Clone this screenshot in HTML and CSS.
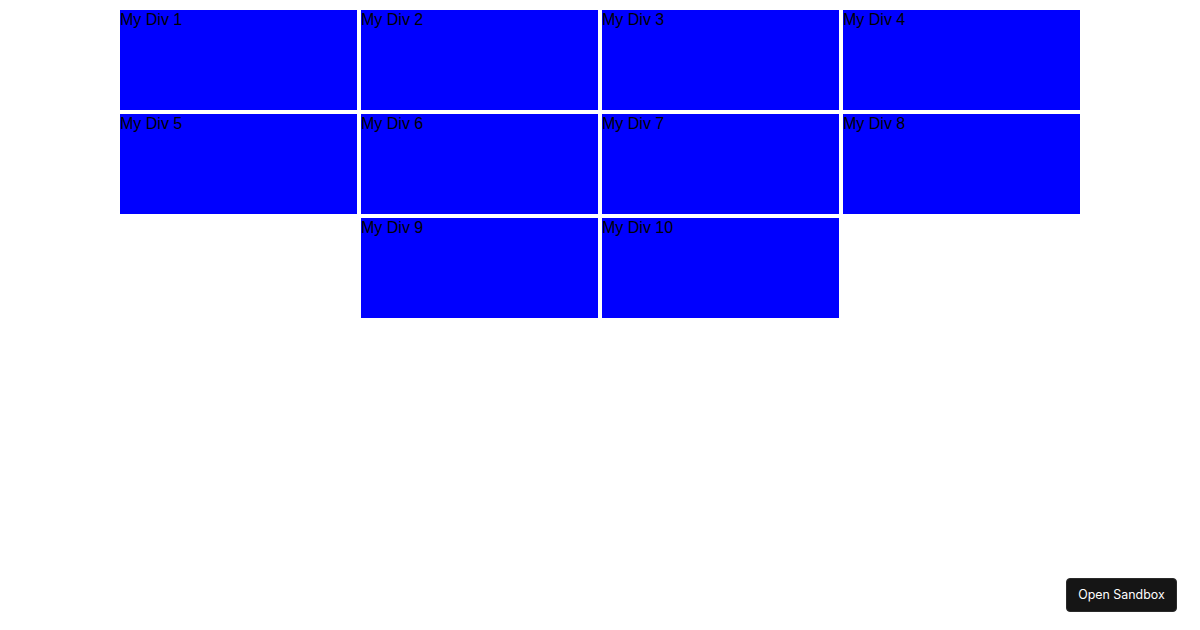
FILE: index.html
```html
<!DOCTYPE html>
<html>
<head>
<meta charset="utf-8">
<link rel="stylesheet" href="styles.css">
</head>
<body>
<div class="grid">
  <div class="box">My Div 1</div>
  <div class="box">My Div 2</div>
  <div class="box">My Div 3</div>
  <div class="box">My Div 4</div>
  <div class="box">My Div 5</div>
  <div class="box">My Div 6</div>
  <div class="box">My Div 7</div>
  <div class="box">My Div 8</div>
  <div class="box">My Div 9</div>
  <div class="box">My Div 10</div>
</div>
<a class="sandbox-btn">Open Sandbox</a>
</body>
</html>
```
FILE: styles.css
```css
html, body {
  margin: 0;
  padding: 0;
  background: #ffffff;
}
body {
  font-family: "Liberation Sans", Arial, sans-serif;
  font-size: 16px;
  color: #000;
}
.grid {
  width: 960px;
  margin: 10px auto 0;
  display: flex;
  flex-wrap: wrap;
  justify-content: center;
  gap: 4px;
}
.box {
  width: 237px;
  height: 100px;
  background: #0000ff;
  line-height: 20px;
}
.sandbox-btn {
  position: fixed;
  right: 23px;
  bottom: 18px;
  width: 111px;
  height: 34px;
  box-sizing: border-box;
  background: #151515;
  border: 1px solid #2a2a2a;
  border-radius: 4px;
  color: #ffffff;
  font-family: "Inter", "Liberation Sans", sans-serif;
  font-size: 12.4px;
  display: flex;
  align-items: center;
  justify-content: center;
  padding-bottom: 1px;
}
```
